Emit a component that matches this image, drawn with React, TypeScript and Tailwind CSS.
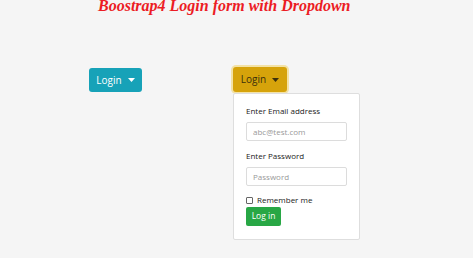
import { useState } from 'react';

function Caret({ className }: { className?: string }) {
  return (
    <svg width="7" height="4" viewBox="0 0 7 4" className={className}>
      <path d="M0 0h7L3.5 4z" fill="currentColor" />
    </svg>
  );
}

export default function App() {
  const [remember, setRemember] = useState(false);

  return (
    <div className="w-[474px] h-[260px] bg-white pr-px pb-[2px] overflow-hidden">
      <div className="h-full bg-[#f5f5f5] flex flex-col font-['Open_Sans',sans-serif]">
        <h1 className="pl-[98px] -mt-[4px] text-[16px] leading-[20px] font-bold italic text-[#ec1c24] font-['Liberation_Serif',serif]">
          Boostrap4 Login form with Dropdown
        </h1>

        <div className="flex items-start pl-[89px] mt-[51px]">
          <button className="mt-px w-[53px] h-[24px] flex items-center justify-center gap-[6px] rounded-[3px] bg-[#17a2b8] text-white text-[10px]">
            Login
            <Caret />
          </button>

          <div className="ml-[91px] flex flex-col">
            <button className="w-[54px] h-[25px] flex items-center justify-center gap-[6px] rounded-[3px] bg-[#d6a30b] text-[#3b300c] text-[10px] ring-2 ring-[#f3e2a6]">
              Login
              <Caret />
            </button>

            <form className="mt-px w-[127px] bg-white border border-[#dedede] rounded-[2px] pt-[11px] pb-[13px] px-[12px] flex flex-col text-[#222] text-[8px]">
              <label className="leading-[12px]">Enter Email address</label>
              <input
                placeholder="abc@test.com"
                className="mt-[5px] w-[101px] h-[19px] px-[6px] border border-[#dcdcdc] rounded-[2px] text-[8px] placeholder:text-[#999] outline-none"
              />
              <label className="mt-[9px] leading-[12px]">Enter Password</label>
              <input
                type="password"
                placeholder="Password"
                className="mt-[5px] w-[101px] h-[19px] px-[6px] border border-[#dcdcdc] rounded-[2px] text-[8px] placeholder:text-[#999] outline-none"
              />
              <label className="mt-[8px] flex items-center gap-[4px] leading-[12px]">
                <input
                  type="checkbox"
                  checked={remember}
                  onChange={(e) => setRemember(e.target.checked)}
                  className="appearance-none w-[7px] h-[7px] m-0 border border-[#666] rounded-[1px] bg-white checked:bg-[#007bff]"
                />
                Remember me
              </label>
              <button
                type="button"
                className="mt-px w-[35px] h-[19px] rounded-[2px] bg-[#28a745] text-white text-[8.5px]"
              >
                Log in
              </button>
            </form>
          </div>
        </div>
      </div>
    </div>
  );
}
